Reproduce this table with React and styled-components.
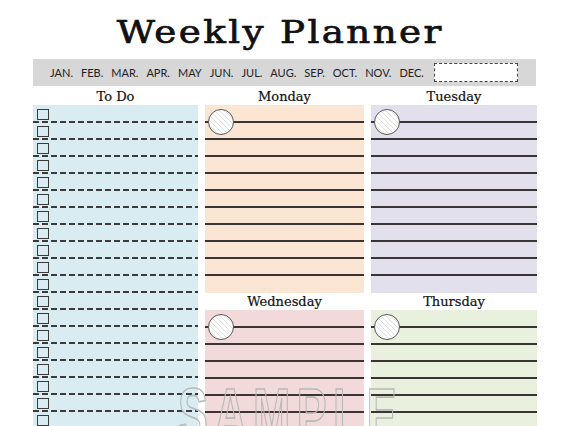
import React from 'react';
import styled, { createGlobalStyle } from 'styled-components';

const Global = createGlobalStyle`
  html, body { margin: 0; padding: 0; background: #fff; }
  body { width: 570px; height: 426px; overflow: hidden; }
`;

const Page = styled.div`
  position: relative;
  width: 570px;
  height: 426px;
  overflow: hidden;
  box-sizing: border-box;
  padding: 0 34px 0 33px;
  background: #fff;
`;

const Title = styled.h1`
  margin: 0;
  height: 59px;
  box-sizing: border-box;
  padding: 14px 8px 0 0;
  text-align: center;
  font-family: "DejaVu Serif", serif;
  font-weight: 400;
  font-size: 31px;
  line-height: 36px;
  letter-spacing: 2px;
  color: #111;
`;

const TitleText = styled.span`
  display: inline-block;
  transform: scaleX(1.2);
  -webkit-text-stroke: 0.7px #111;
`;

const MonthBar = styled.div`
  height: 27px;
  background: #d7d7d7;
  display: flex;
  align-items: center;
  padding: 0 18px 0 17px;
`;

const Months = styled.div`
  flex: 1;
  display: flex;
  justify-content: space-between;
  margin-right: 10px;
  font-family: Lato, "Open Sans", sans-serif;
  font-size: 11px;
  color: #222;
`;

const DateBox = styled.div`
  width: 84px;
  height: 19px;
  box-sizing: border-box;
  border: 1.5px dashed #444;
  background: #fff;
`;

const Board = styled.div`
  display: grid;
  grid-template-columns: 165px 159px 166px;
  grid-template-rows: 205px 1fr;
  grid-template-areas:
    "todo mon tue"
    "todo wed thu";
  column-gap: 7px;
  margin-top: 2px;
  height: 400px;
`;

const Card = styled.section`
  grid-area: ${(p) => p.$area};
  display: flex;
  flex-direction: column;
  min-height: 0;
`;

const Heading = styled.h2`
  margin: 0;
  height: 17px;
  text-align: center;
  font-family: "DejaVu Serif", serif;
  font-weight: 400;
  font-size: 13px;
  line-height: 17px;
  color: #111;
  -webkit-text-stroke: 0.2px #111;
`;

const Panel = styled.div`
  position: relative;
  flex: 1;
  background: ${(p) => p.$bg};
  padding-top: 1px;
  overflow: hidden;
`;

const Rule = styled.div`
  height: 17px;
  box-sizing: border-box;
  border-bottom: 2px solid #3a3434;
`;

const Dot = styled.div`
  position: absolute;
  left: 3px;
  top: 4px;
  width: 26px;
  height: 26px;
  box-sizing: border-box;
  border-radius: 50%;
  border: 1.5px solid #5a5a5a;
  background: repeating-linear-gradient(45deg, #fff 0 2.5px, #e0e0e0 2.5px 3.5px);
`;

const TodoRow = styled.div`
  height: 17px;
  box-sizing: border-box;
  padding: 3px 0 0 4px;
  background-image: repeating-linear-gradient(90deg, #3a3a3a 0 6px, transparent 6px 9px);
  background-size: 100% 2px;
  background-position: left bottom;
  background-repeat: no-repeat;
`;

const Check = styled.div`
  width: 12px;
  height: 11px;
  box-sizing: border-box;
  border: 1.5px solid #3a3a3a;
`;

const Watermark = styled.div`
  position: absolute;
  left: 178px;
  top: 378px;
  font-family: "Liberation Sans", Arial, sans-serif;
  font-weight: 700;
  font-size: 56px;
  line-height: 1;
  letter-spacing: 8px;
  color: transparent;
  -webkit-text-stroke: 1.3px #b9b9b9;
  transform: scale(0.8, 1.3);
  transform-origin: left top;
  pointer-events: none;
`;

const months = ['JAN.', 'FEB.', 'MAR.', 'APR.', 'MAY', 'JUN.', 'JUL.', 'AUG.', 'SEP.', 'OCT.', 'NOV.', 'DEC.'];

const days = [
  { name: 'Monday', area: 'mon', bg: '#fbe6d4', rows: 10 },
  { name: 'Tuesday', area: 'tue', bg: '#e3e0ee', rows: 10 },
  { name: 'Wednesday', area: 'wed', bg: '#f2dada', rows: 8 },
  { name: 'Thursday', area: 'thu', bg: '#e9f1de', rows: 8 },
];

export default function App() {
  return (
    <Page>
      <Global />
      <Title>
        <TitleText>Weekly Planner</TitleText>
      </Title>
      <MonthBar>
        <Months>
          {months.map((m) => (
            <span key={m}>{m}</span>
          ))}
        </Months>
        <DateBox />
      </MonthBar>
      <Board>
        <Card $area="todo">
          <Heading>To Do</Heading>
          <Panel $bg="#d9ecf2">
            {Array.from({ length: 20 }).map((_, i) => (
              <TodoRow key={i}>
                <Check />
              </TodoRow>
            ))}
          </Panel>
        </Card>
        {days.map((d) => (
          <Card key={d.name} $area={d.area}>
            <Heading>{d.name}</Heading>
            <Panel $bg={d.bg}>
              {Array.from({ length: d.rows }).map((_, i) => (
                <Rule key={i} />
              ))}
              <Dot />
            </Panel>
          </Card>
        ))}
      </Board>
      <Watermark>SAMPLE</Watermark>
    </Page>
  );
}
